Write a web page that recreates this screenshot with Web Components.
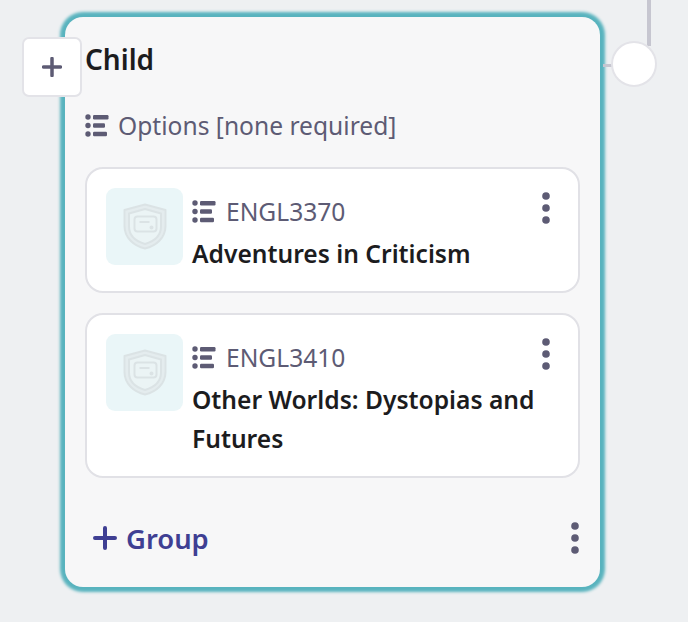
<!DOCTYPE html>
<html lang="en">
<head>
<meta charset="utf-8">
<title>Child group</title>
<style>
  html, body { margin: 0; padding: 0; height: 100%; }
  body { background: #eef0f2; overflow: hidden; }
</style>
</head>
<body>
<group-node heading="Child" note="Options [none required]">
  <course-card code="ENGL3370" name="Adventures in Criticism"></course-card>
  <course-card code="ENGL3410" name="Other Worlds: Dystopias and Futures"></course-card>
</group-node>

<script>
const LIST_ICON = /* svg */ `
  <svg width="24" height="23" viewBox="0 0 24 23" fill="#5d5b74" aria-hidden="true">
    <circle cx="3" cy="3" r="2.7"/><circle cx="3" cy="11.5" r="2.7"/><circle cx="3" cy="20" r="2.7"/>
    <rect x="8" y="1" width="15.5" height="4.4" rx="1.2"/>
    <rect x="8" y="9.3" width="12" height="4.4" rx="1.2"/>
    <rect x="8" y="17.8" width="14" height="4.4" rx="1.2"/>
  </svg>`;

const KEBAB_ICON = /* svg */ `
  <svg width="10" height="32" viewBox="0 0 10 32" fill="#5d5b74" aria-hidden="true">
    <circle cx="5" cy="4" r="3.8"/><circle cx="5" cy="16" r="3.8"/><circle cx="5" cy="28" r="3.8"/>
  </svg>`;

class CourseCard extends HTMLElement {
  constructor() {
    super();

    const template = document.createElement( 'template' );
    template.innerHTML = /* template */ `
      <style>
        :host {
          background: #ffffff;
          border: 2px solid #e1e1e6;
          border-radius: 18px;
          box-sizing: border-box;
          display: flex;
          gap: 9px;
          padding: 19px 19px 18px 19px;
          width: 495px;
        }

        .thumb {
          align-items: center;
          background: #eaf6f8;
          border-radius: 9px;
          display: flex;
          flex: none;
          height: 77px;
          justify-content: center;
          width: 77px;
        }

        .body { flex: 1; min-width: 0; }

        .code {
          align-items: center;
          color: #5d5b74;
          display: flex;
          font-size: 24.6px;
          gap: 10px;
          height: 46px;
        }

        .code svg:last-child {
          align-self: flex-start;
          margin: 4px 8px 0 auto;
        }

        .title {
          color: #1c1c1e;
          font-size: 24.6px;
          font-weight: 600;
          line-height: 39px;
          margin: 0;
        }
      </style>
      <div class="thumb">
        <svg width="44" height="47" viewBox="0 0 44 47" fill="none" stroke="#dbe3e5" stroke-width="2" stroke-linejoin="round">
          <path d="M22 1.5 L42.5 7 V23 C42.5 35 33 43 22 45.5 C11 43 1.5 35 1.5 23 V7 Z" fill="#e4ecee"/>
          <path d="M22 6 L38 10.5 V23.5 C38 33 30.5 38.5 22 41 C13.5 38.5 6 33 6 23.5 V10.5 Z" fill="#ebf4f5"/>
          <rect x="11.5" y="13.5" width="22" height="15" rx="3"/>
          <path d="M16.5 19 H26.5"/>
          <circle cx="28.5" cy="24.5" r="1" fill="#dbe3e5"/>
        </svg>
      </div>
      <div class="body">
        <div class="code">${LIST_ICON}<span></span>${KEBAB_ICON}</div>
        <p class="title"></p>
      </div>
    `;

    const shadowRoot = this.attachShadow( {mode: 'open'} );
    shadowRoot.appendChild( template.content.cloneNode( true ) );

    this.$code = shadowRoot.querySelector( '.code span' );
    this.$title = shadowRoot.querySelector( '.title' );
  }

  connectedCallback() {
    this.$code.textContent = this.getAttribute( 'code' );
    this.$title.textContent = this.getAttribute( 'name' );
  }
}

class GroupNode extends HTMLElement {
  constructor() {
    super();

    const template = document.createElement( 'template' );
    template.innerHTML = /* template */ `
      <style>
        :host {
          box-sizing: border-box;
          display: block;
          font-family: 'Noto Sans', sans-serif;
          height: 622px;
          padding: 17px 0 0 65px;
          position: relative;
          width: 688px;
        }

        .card {
          background: #f7f7f8;
          border-radius: 18px;
          box-shadow: 0 0 3px 5px #58b3be;
          box-sizing: border-box;
          display: flex;
          flex-direction: column;
          height: 570px;
          padding: 21px 20px 0 20px;
          width: 535px;
        }

        h2 {
          color: #1c1c1e;
          font-size: 28px;
          font-weight: 600;
          line-height: 42px;
          margin: 0;
        }

        .note {
          align-items: center;
          color: #5d5b74;
          display: flex;
          font-size: 24.6px;
          gap: 9px;
          height: 36px;
          margin: 27px 0 24px 0;
        }

        .list {
          display: flex;
          flex-direction: column;
          gap: 20px;
        }

        .footer {
          align-items: center;
          display: flex;
          justify-content: space-between;
          margin-top: 40px;
          padding: 0 0 0 8px;
        }

        .add {
          align-items: center;
          color: #3f3f93;
          display: flex;
          font-size: 27.4px;
          font-weight: 600;
          gap: 9px;
        }

        .add span { margin-top: 2px; }

        .plus {
          align-items: center;
          background: #ffffff;
          border: 2px solid #e3e3e8;
          border-radius: 7px;
          box-sizing: border-box;
          display: flex;
          height: 60px;
          justify-content: center;
          left: 22px;
          position: absolute;
          top: 37px;
          width: 60px;
        }

        .wire-v {
          background: #c6c6d0;
          height: 46px;
          left: 647px;
          position: absolute;
          top: 0;
          width: 4px;
        }

        .wire-h {
          background: #c6c6d0;
          height: 3px;
          left: 603px;
          position: absolute;
          top: 64px;
          width: 10px;
        }

        .port {
          background: #ffffff;
          border: 2px solid #e3e3e8;
          border-radius: 50%;
          box-sizing: border-box;
          height: 46px;
          left: 611px;
          position: absolute;
          top: 41px;
          width: 46px;
        }
      </style>
      <div class="wire-v"></div>
      <div class="wire-h"></div>
      <div class="card">
        <h2></h2>
        <div class="note">${LIST_ICON}<span></span></div>
        <div class="list"><slot></slot></div>
        <div class="footer">
          <div class="add">
            <svg width="24" height="24" viewBox="0 0 24 24" stroke="#3f3f93" stroke-width="4" stroke-linecap="round" aria-hidden="true">
              <path d="M12 2 V22 M2 12 H22"/>
            </svg>
            <span>Group</span>
          </div>
          ${KEBAB_ICON}
        </div>
      </div>
      <div class="plus">
        <svg width="20" height="20" viewBox="0 0 20 20" stroke="#5d5b74" stroke-width="3.5" stroke-linecap="round" aria-hidden="true">
          <path d="M10 1.5 V18.5 M1.5 10 H18.5"/>
        </svg>
      </div>
      <div class="port"></div>
    `;

    const shadowRoot = this.attachShadow( {mode: 'open'} );
    shadowRoot.appendChild( template.content.cloneNode( true ) );

    this.$heading = shadowRoot.querySelector( 'h2' );
    this.$note = shadowRoot.querySelector( '.note span' );
  }

  connectedCallback() {
    this.$heading.textContent = this.getAttribute( 'heading' );
    this.$note.textContent = this.getAttribute( 'note' );
  }
}

window.customElements.define( 'course-card', CourseCard );
window.customElements.define( 'group-node', GroupNode );
</script>
</body>
</html>
